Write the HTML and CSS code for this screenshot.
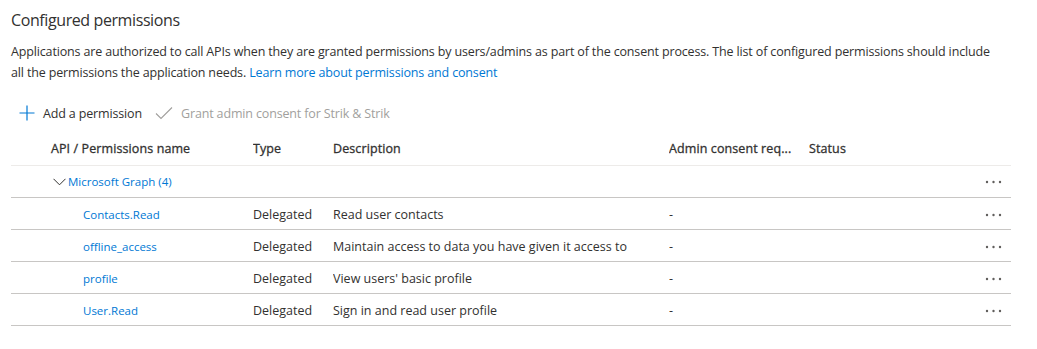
FILE: index.html
```html
<!DOCTYPE html>
<html>
<head>
<meta charset="utf-8">
<link rel="stylesheet" href="styles.css">
</head>
<body>
<div class="page">
  <h2 class="title">Configured permissions</h2>
  <p class="intro">Applications are authorized to call APIs when they are granted permissions by users/admins as part of the consent process. The list of configured permissions should include all the permissions the application needs. <a class="link" href="#">Learn more about permissions and consent</a></p>
  <div class="toolbar">
    <button class="tb-btn">
      <svg class="ico" width="16" height="16" viewBox="0 0 16 16"><path d="M8 0.5V15.5M0.5 8H15.5" stroke="#0078d4" stroke-width="1.2" fill="none"/></svg>
      <span>Add a permission</span>
    </button>
    <button class="tb-btn disabled">
      <svg class="ico" width="18" height="14" viewBox="0 0 18 14"><path d="M1 7.5L6 12.5L17 1.5" stroke="#a19f9d" stroke-width="1.1" fill="none"/></svg>
      <span>Grant admin consent for Strik &amp; Strik</span>
    </button>
  </div>
  <div class="table">
    <div class="row head">
      <div class="c name">API / Permissions name</div>
      <div class="c">Type</div>
      <div class="c">Description</div>
      <div class="c">Admin consent req...</div>
      <div class="c">Status</div>
      <div class="c"></div>
    </div>
    <div class="row group">
      <div class="c grp">
        <svg width="13" height="8" viewBox="0 0 13 8"><path d="M0.5 0.8L6.5 6.8L12.5 0.8" stroke="#323130" stroke-width="1" fill="none"/></svg>
        <a class="tlink" href="#">Microsoft Graph (4)</a>
      </div>
      <div class="more"><svg width="17" height="4" viewBox="0 0 17 4"><circle cx="2" cy="2" r="1.2"/><circle cx="8.5" cy="2" r="1.2"/><circle cx="15" cy="2" r="1.2"/></svg></div>
    </div>
    <div class="row item">
      <div class="c perm"><a class="tlink" href="#">Contacts.Read</a></div>
      <div class="c">Delegated</div>
      <div class="c">Read user contacts</div>
      <div class="c">-</div>
      <div class="c"></div>
      <div class="more"><svg width="17" height="4" viewBox="0 0 17 4"><circle cx="2" cy="2" r="1.2"/><circle cx="8.5" cy="2" r="1.2"/><circle cx="15" cy="2" r="1.2"/></svg></div>
    </div>
    <div class="row item">
      <div class="c perm"><a class="tlink" href="#">offline_access</a></div>
      <div class="c">Delegated</div>
      <div class="c">Maintain access to data you have given it access to</div>
      <div class="c">-</div>
      <div class="c"></div>
      <div class="more"><svg width="17" height="4" viewBox="0 0 17 4"><circle cx="2" cy="2" r="1.2"/><circle cx="8.5" cy="2" r="1.2"/><circle cx="15" cy="2" r="1.2"/></svg></div>
    </div>
    <div class="row item">
      <div class="c perm"><a class="tlink" href="#">profile</a></div>
      <div class="c">Delegated</div>
      <div class="c">View users' basic profile</div>
      <div class="c">-</div>
      <div class="c"></div>
      <div class="more"><svg width="17" height="4" viewBox="0 0 17 4"><circle cx="2" cy="2" r="1.2"/><circle cx="8.5" cy="2" r="1.2"/><circle cx="15" cy="2" r="1.2"/></svg></div>
    </div>
    <div class="row item">
      <div class="c perm"><a class="tlink" href="#">User.Read</a></div>
      <div class="c">Delegated</div>
      <div class="c">Sign in and read user profile</div>
      <div class="c">-</div>
      <div class="c"></div>
      <div class="more"><svg width="17" height="4" viewBox="0 0 17 4"><circle cx="2" cy="2" r="1.2"/><circle cx="8.5" cy="2" r="1.2"/><circle cx="15" cy="2" r="1.2"/></svg></div>
    </div>
  </div>
</div>
</body>
</html>
```
FILE: styles.css
```css
* { box-sizing: border-box; }
body {
  margin: 0;
  background: #fff;
  font-family: "Open Sans", "Noto Sans", sans-serif;
  color: #323130;
}
.page {
  padding: 8px 0 0 11px;
}
.title {
  margin: 0;
  font-size: 16px;
  font-weight: 400;
  line-height: 24px;
  letter-spacing: -0.4px;
}
.intro {
  margin: 9px 0 0;
  max-width: 990px;
  font-size: 12.5px;
  line-height: 21px;
  letter-spacing: -0.15px;
}
.link {
  color: #0078d4;
  text-decoration: none;
}
.toolbar {
  display: flex;
  align-items: center;
  gap: 13px;
  margin-top: 16px;
  padding-left: 8px;
  height: 28px;
}
.tb-btn {
  display: flex;
  align-items: center;
  gap: 8px;
  background: none;
  border: 0;
  padding: 0;
  font: inherit;
  font-size: 12.5px;
  letter-spacing: -0.15px;
  color: #323130;
}
.tb-btn.disabled { color: #a19f9d; }
.tb-btn .ico { display: block; }
.table {
  margin-top: 5px;
  width: 1000px;
  font-size: 12.5px;
}
.row {
  display: grid;
  grid-template-columns: 242px 80px 336px 140px 166px 36px;
  align-items: center;
  border-bottom: 1px solid #c8c6c4;
  height: 32px;
}
.row.item { padding-top: 2px; }
.row.head {
  height: 34px;
  border-bottom-color: #edebe9;
}
.row.head .c { letter-spacing: 0.1px; -webkit-text-stroke: 0.3px #323130; }
.row.head .name { padding-left: 40px; }
.row.group {
  grid-template-columns: 964px 36px;
}
.grp {
  display: flex;
  align-items: center;
  gap: 2px;
  padding-left: 42px;
}
.grp svg { display: block; margin-top: 1px; }
.perm { padding-left: 72px; }
.tlink {
  color: #0078d4;
  text-decoration: none;
  font-size: 11.5px;
}
.c {
  white-space: nowrap;
  overflow: hidden;
}
.more {
  display: flex;
  align-items: center;
  padding-left: 10px;
  fill: #605e5c;
}
.more svg { display: block; }
```
